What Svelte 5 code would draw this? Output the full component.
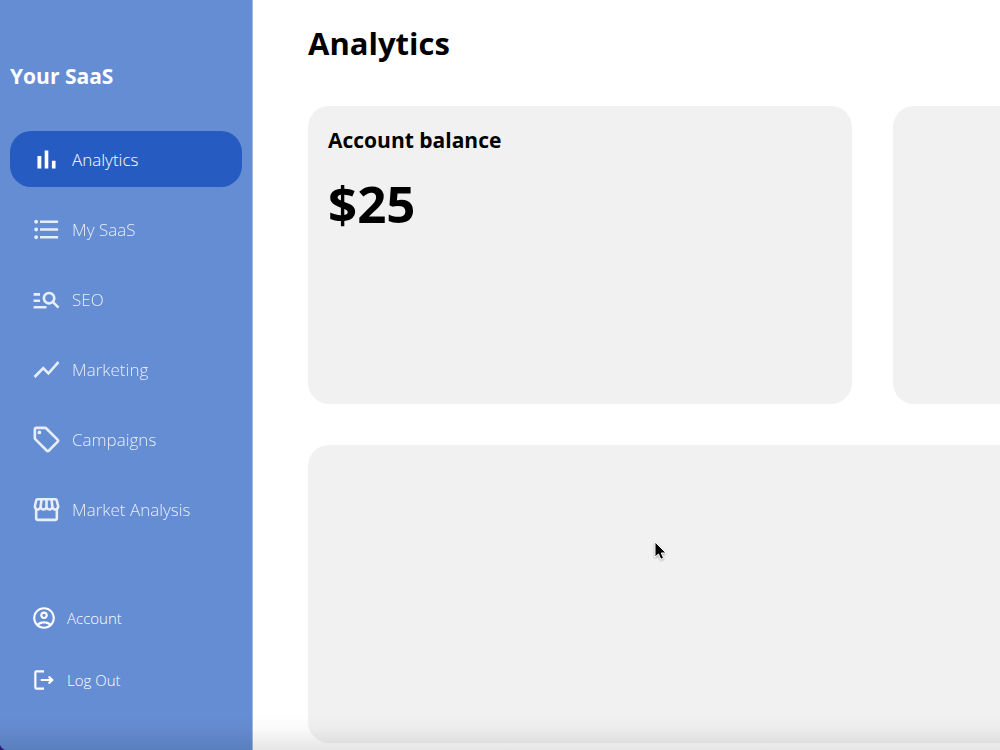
<script lang="ts">
  interface NavItem {
    label: string
    /** 24x24 path data */
    icon: string
  }

  const items: NavItem[] = [
    {
      label: 'Analytics',
      icon: 'M5 9.2h3V19H5zM10.6 5h2.8v14h-2.8zm5.6 8H19v6h-2.8z',
    },
    {
      label: 'My SaaS',
      icon: 'M4 10.5c-.83 0-1.5.67-1.5 1.5s.67 1.5 1.5 1.5 1.5-.67 1.5-1.5-.67-1.5-1.5-1.5zm0-6c-.83 0-1.5.67-1.5 1.5S3.17 7.5 4 7.5 5.5 6.83 5.5 6 4.83 4.5 4 4.5zm0 12c-.83 0-1.5.68-1.5 1.5s.68 1.5 1.5 1.5 1.5-.68 1.5-1.5-.67-1.5-1.5-1.5zM7 19h14v-2H7v2zm0-6h14v-2H7v2zm0-8v2h14V5H7z',
    },
    {
      label: 'SEO',
      icon: 'M7 9H2V7h5v2zm0 3H2v2h5v-2zm13.59 7l-3.83-3.83c-.8.52-1.74.83-2.76.83-2.76 0-5-2.24-5-5s2.24-5 5-5 5 2.24 5 5c0 1.02-.31 1.96-.83 2.75L22 17.59 20.59 19zM17 11c0-1.65-1.35-3-3-3s-3 1.35-3 3 1.35 3 3 3 3-1.35 3-3zM2 19h10v-2H2v2z',
    },
    {
      label: 'Marketing',
      icon: 'M3.5 18.49l6-6.01 4 4L22 6.92l-1.41-1.41-7.09 7.97-4-4L2 16.99z',
    },
    {
      label: 'Campaigns',
      icon: 'M21.41 11.58l-9-9C12.05 2.22 11.55 2 11 2H4c-1.1 0-2 .9-2 2v7c0 .55.22 1.05.59 1.42l9 9c.36.36.86.58 1.41.58s1.05-.22 1.41-.59l7-7c.37-.36.59-.86.59-1.41s-.23-1.06-.59-1.42zM13 20.01L4 11V4h7l9 9-7 7.01zM6.5 5a1.5 1.5 0 1 0 0 3 1.5 1.5 0 0 0 0-3z',
    },
    {
      label: 'Market Analysis',
      icon: 'M21.9 8.89l-1.05-4.37c-.22-.9-1-1.52-1.91-1.52H5.05c-.9 0-1.69.63-1.9 1.52L2.1 8.89c-.24 1.02-.02 2.06.62 2.88.08.11.19.19.28.29V19c0 1.1.9 2 2 2h14c1.1 0 2-.9 2-2v-6.94c.09-.09.2-.18.28-.28.64-.82.87-1.87.62-2.89zm-2.99-3.9l1.05 4.37c.1.42.01.84-.25 1.17-.14.18-.44.47-.94.47-.61 0-1.14-.49-1.21-1.14L16.98 5l1.93-.01zM13 5h1.96l.54 4.52c.05.39-.07.78-.33 1.07-.22.26-.54.41-.95.41-.67 0-1.22-.59-1.22-1.31V5zM8.49 9.52L9.04 5H11v4.69c0 .72-.55 1.31-1.29 1.31-.34 0-.65-.15-.89-.41-.25-.29-.37-.68-.33-1.07zm-4.45-.16L5.05 5h1.97l-.58 4.86c-.08.65-.6 1.14-1.21 1.14-.49 0-.8-.29-.93-.47-.27-.32-.36-.75-.26-1.17zM5 19v-6.03c.08.01.15.03.23.03.87 0 1.66-.36 2.24-.95.6.6 1.4.95 2.31.95.87 0 1.65-.36 2.23-.93.59.57 1.39.93 2.29.93.84 0 1.64-.35 2.24-.95.58.59 1.37.95 2.24.95.08 0 .15-.02.23-.03V19H5z',
    },
  ];

  const userItems: NavItem[] = [
    {
      label: 'Account',
      icon: 'M12 2C6.48 2 2 6.48 2 12s4.48 10 10 10 10-4.48 10-10S17.52 2 12 2zM7.35 18.5C8.66 17.56 10.26 17 12 17s3.34.56 4.65 1.5C15.34 19.44 13.74 20 12 20s-3.34-.56-4.65-1.5zm10.79-1.38C16.45 15.8 14.32 15 12 15s-4.45.8-6.14 2.12C4.7 15.73 4 13.95 4 12c0-4.42 3.58-8 8-8s8 3.58 8 8c0 1.95-.7 3.73-1.86 5.12zM12 6c-1.93 0-3.5 1.57-3.5 3.5S10.07 13 12 13s3.5-1.57 3.5-3.5S13.93 6 12 6zm0 5c-.83 0-1.5-.67-1.5-1.5S11.17 8 12 8s1.5.67 1.5 1.5S12.83 11 12 11z',
    },
    {
      label: 'Log Out',
      icon: 'M5 5h7V3H5c-1.1 0-2 .9-2 2v14c0 1.1.9 2 2 2h7v-2H5V5zm16 7l-4-4-1.4 1.4 1.6 1.6H9v2h8.2l-1.6 1.6L17 16l4-4z',
    },
  ];

  let active = $state('Analytics');
</script>

<div class="layout">
  <aside class="sidebar">
    <div class="brand">Your SaaS</div>

    <nav class="nav">
      {#each items as item}
        <a
          class="nav-item"
          class:active={active === item.label}
          href="#{item.label}"
          onclick={() => (active = item.label)}
        >
          <svg class="icon" viewBox="0 0 24 24" aria-hidden="true"><path d={item.icon} /></svg>
          {item.label}
        </a>
      {/each}
    </nav>

    <div class="user-nav">
      {#each userItems as item}
        <a class="user-item" href="#{item.label}">
          <svg class="icon small" viewBox="0 0 24 24" aria-hidden="true"><path d={item.icon} /></svg>
          {item.label}
        </a>
      {/each}
    </div>
  </aside>

  <main class="content">
    <h1>Analytics</h1>
    <div class="cards">
      <section class="card">
        <h2>Account balance</h2>
        <p class="amount">$25</p>
      </section>
      <section class="card"></section>
      <section class="card wide"></section>
    </div>
  </main>

  <div class="fade"></div>
  <div class="corner"></div>
  <svg class="pointer" viewBox="0 0 14 20" aria-hidden="true">
    <path d="M1 1v15l3.500-3 2.300 5.300 2.800-1.200-2.300-5.100H12z" />
  </svg>
</div>

<style>
  :global(body) {
    font-family: 'Open Sans', 'Noto Sans', sans-serif;
    color: #000;
    background: #fff;
  }

  .layout {
    position: relative;
    display: flex;
    height: 100vh;
    overflow: hidden;
  }

  .sidebar {
    flex: 0 0 253px;
    box-sizing: border-box;
    padding: 62px 10px 0;
    background: #658dd3;
    border-right: 1px solid #a4bae3;
  }

  .brand {
    margin-bottom: 41px;
    color: #fff;
    font-size: 21px;
    font-weight: 700;
    line-height: 28px;
  }

  .nav {
    display: flex;
    flex-direction: column;
    gap: 14px;
  }

  .nav-item,
  .user-item {
    display: flex;
    align-items: center;
    gap: 10px;
    padding-left: 21px;
    color: #fff;
    font-weight: 300;
    text-decoration: none;
  }

  .nav-item {
    height: 56px;
    border-radius: 21px;
    font-size: 17px;
    opacity: 0.85;
  }

  .nav-item.active {
    background: #265cc2;
    opacity: 1;
  }

  .user-nav {
    display: flex;
    flex-direction: column;
    gap: 31px;
    margin-top: 65px;
  }

  .user-item {
    height: 31px;
    font-size: 15px;
  }

  .icon {
    width: 31px;
    height: 31px;
    fill: currentColor;
  }

  .icon.small {
    width: 26px;
    height: 26px;
  }

  .content {
    flex: 1;
    min-width: 0;
    padding: 22px 55px 0;
  }

  h1 {
    margin: 0 0 42px;
    font-size: 31px;
    line-height: 42px;
  }

  .cards {
    display: grid;
    grid-template-columns: repeat(2, minmax(544px, 1fr));
    grid-auto-rows: 298px;
    gap: 41px;
  }

  .card {
    box-sizing: border-box;
    padding: 20px;
    background: #f1f1f1;
    border-radius: 21px;
  }

  .card.wide {
    grid-column: span 2;
  }

  h2 {
    margin: 0;
    font-size: 21px;
    line-height: 28px;
  }

  .amount {
    margin: 14px 0 0;
    font-size: 51px;
    font-weight: 700;
    line-height: 70px;
  }

  .fade {
    position: absolute;
    inset: auto 0 0;
    height: 36px;
    background: linear-gradient(transparent, rgba(0, 0, 0, 0.02) 40%, rgba(0, 0, 0, 0.1));
    pointer-events: none;
  }

  /* rounded window corner */
  .corner {
    position: absolute;
    left: 0;
    bottom: 0;
    width: 8px;
    height: 8px;
    background: radial-gradient(circle at 100% 0, transparent 8px, #2c1775 9px);
  }

  .pointer {
    position: absolute;
    left: 654px;
    top: 541px;
    width: 14px;
    height: 20px;
    fill: #000;
    stroke: #fff;
    stroke-width: 1;
    filter: drop-shadow(0 1px 1px rgba(0, 0, 0, 0.3));
    pointer-events: none;
  }
</style>
